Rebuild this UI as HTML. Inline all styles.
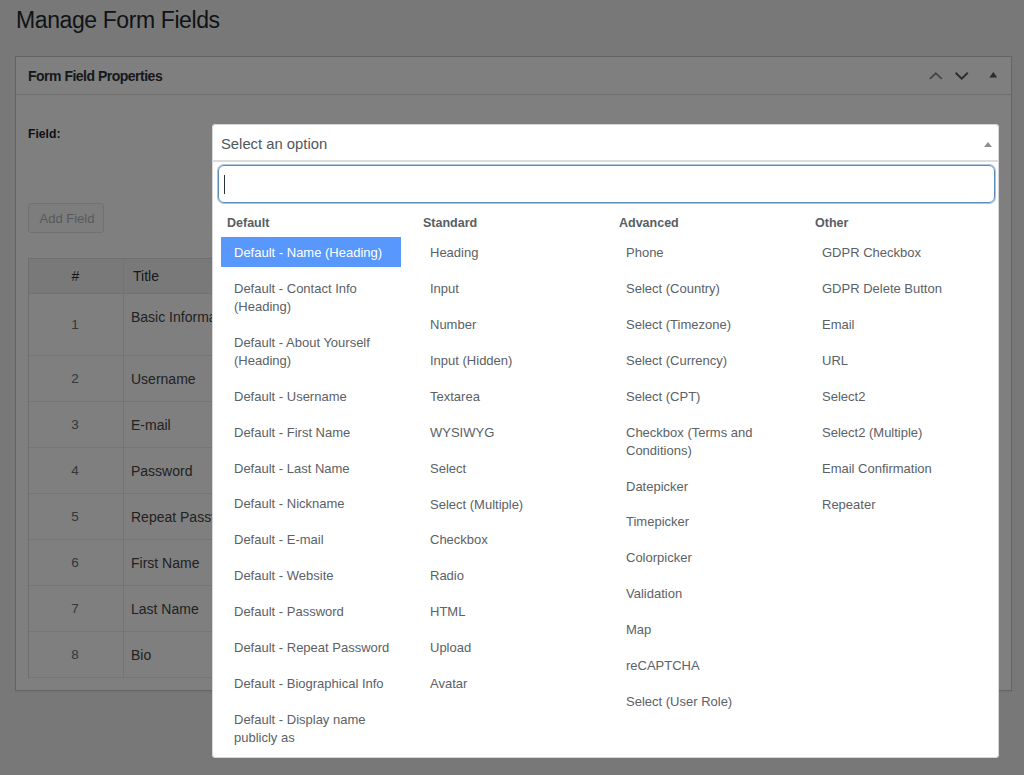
<!DOCTYPE html>
<html><head><meta charset="utf-8">
<style>
*{box-sizing:border-box;margin:0;padding:0}
html,body{width:1024px;height:775px;overflow:hidden;background:#f0f0f1;font-family:"Liberation Sans",sans-serif;color:#1d2327;position:relative}
.abs{position:absolute}
h1{position:absolute;left:16px;top:5px;font-size:23px;letter-spacing:-0.4px;font-weight:400;line-height:30px;color:#23282d;white-space:nowrap}
.panel{position:absolute;left:15px;top:56px;width:997px;height:635px;background:#fff;border:1px solid #c8c9cc;box-shadow:0 1px 1px rgba(0,0,0,.04)}
.phead{position:absolute;left:0;top:0;right:0;height:38px;border-bottom:1px solid #dcdcde}
.phead .t{position:absolute;left:12px;top:10px;font-size:14px;letter-spacing:-0.5px;font-weight:700;line-height:18px;color:#2c3338;white-space:nowrap}
.lbl{position:absolute;left:28px;top:125px;font-size:12.2px;font-weight:700;line-height:18px;color:#1d2327}
.btn{position:absolute;left:28px;padding-left:2px;padding-top:1px;top:203px;width:76px;height:30px;border:1px solid #e3e3e5;border-radius:3px;background:#fbfbfb;color:#b0b3b6;font-size:13px;line-height:28px;text-align:center}
.tbl{position:absolute;left:28px;top:258px;width:970px;height:420px;border:1px solid #dcdcde;background:#fff}
.thead{position:absolute;left:0;top:0;right:0;height:35px;background:#f3f3f3;border-bottom:1px solid #e2e2e2}
.hn{position:absolute;left:0;width:93px;top:-1px;text-align:center;font-size:14px;line-height:36px;color:#333}
.ht{position:absolute;left:104px;top:-1px;font-size:14px;line-height:36px;color:#333}
.row{position:absolute;left:0;right:0;border-bottom:1px solid #ebebeb}
.row .n{position:absolute;left:0;top:0;bottom:0;width:92px;text-align:center;font-size:13.5px;color:#6a6e73;display:flex;align-items:center;justify-content:center}
.row .ti{position:absolute;left:102px;top:0;font-size:14px;line-height:46px;color:#444;white-space:nowrap}
.vline{position:absolute;left:94px;top:0;bottom:0;width:1px;background:#e8e8e8}
.overlay{position:absolute;left:0;top:0;width:1024px;height:775px;background:rgba(0,0,0,.5)}
.dd{position:absolute;left:212px;top:124px;width:787px;height:634px;background:#fff;border-radius:4px;box-shadow:inset 0 0 0 1px #d6d6d6}
.sel{position:absolute;left:0;top:0;right:0;height:38px;border-bottom:2px solid #dcdcde}
.sel .ph{position:absolute;left:9px;top:11px;font-size:14.8px;line-height:18px;color:#50575e;white-space:nowrap}
.arrow{position:absolute;left:772px;top:18px;width:0;height:0;border-left:4px solid transparent;border-right:4px solid transparent;border-bottom:5px solid #8c8f94}
.search{position:absolute;left:6px;top:41px;width:777px;height:38px;border:1px solid #5b8bbb;box-shadow:0 0 0 1px rgba(91,139,187,.5);border-radius:6px}
.caret{position:absolute;left:5px;top:9px;width:1px;height:19px;background:#2c3338}
.col{position:absolute;top:88px;width:196px}
.gh{position:absolute;left:6px;top:2px;font-size:12.5px;font-weight:700;line-height:18px;color:#585e64;white-space:nowrap}
.opt{position:absolute;left:0;width:180px;padding:7px 0 5px 13px;font-size:13px;line-height:17.93px;color:#5b6167;white-space:nowrap}
.opt.hl{background:#5897fb;color:#fff}
</style></head><body>
<h1>Manage Form Fields</h1>
<div class="panel">
  <div class="phead"><div class="t">Form Field Properties</div></div>
</div>
<svg class="abs" style="left:920px;top:60px" width="90" height="30" viewBox="920 60 90 30">
<polyline points="929.8,78.9 935.8,73.3 941.8,78.9" fill="none" stroke="#8c8f94" stroke-width="1.9"/>
<polyline points="955.6,72.8 961.7,78.6 967.8,72.8" fill="none" stroke="#50575e" stroke-width="1.9"/>
<polygon points="989.4,77.6 993.3,72 997.2,77.6" fill="#50575e"/>
</svg>
<div class="lbl">Field:</div>
<div class="btn">Add Field</div>
<div class="tbl" id="tbl">
<div class="thead"><div class="hn">#</div><div class="ht">Title</div></div>
<div class="row" style="top:35px;height:62px"><div class="n">1</div><div class="ti">Basic Information</div></div>
<div class="row" style="top:97px;height:46px"><div class="n">2</div><div class="ti">Username</div></div>
<div class="row" style="top:143px;height:46px"><div class="n">3</div><div class="ti">E-mail</div></div>
<div class="row" style="top:189px;height:46px"><div class="n">4</div><div class="ti">Password</div></div>
<div class="row" style="top:235px;height:46px"><div class="n">5</div><div class="ti">Repeat Password</div></div>
<div class="row" style="top:281px;height:46px"><div class="n">6</div><div class="ti">First Name</div></div>
<div class="row" style="top:327px;height:46px"><div class="n">7</div><div class="ti">Last Name</div></div>
<div class="row" style="top:373px;height:46px"><div class="n">8</div><div class="ti">Bio</div></div>
<div class="vline"></div>
</div><!--tbl-->
<div class="overlay"></div>
<div class="dd">
  <div class="sel"><div class="ph">Select an option</div><div class="arrow"></div></div>
  <div class="search"><div class="caret"></div></div>
<!--opts-->
<div class="col" style="left:9px">
  <div class="gh">Default</div>
  <div class="opt hl" style="top:25px">Default - Name (Heading)</div>
  <div class="opt" style="top:60.93px">Default - Contact Info<br>(Heading)</div>
  <div class="opt" style="top:114.78999999999999px">Default - About Yourself<br>(Heading)</div>
  <div class="opt" style="top:168.64999999999998px">Default - Username</div>
  <div class="opt" style="top:204.57999999999998px">Default - First Name</div>
  <div class="opt" style="top:240.51px">Default - Last Name</div>
  <div class="opt" style="top:276.44px">Default - Nickname</div>
  <div class="opt" style="top:312.37px">Default - E-mail</div>
  <div class="opt" style="top:348.3px">Default - Website</div>
  <div class="opt" style="top:384.23px">Default - Password</div>
  <div class="opt" style="top:420.16px">Default - Repeat Password</div>
  <div class="opt" style="top:456.09000000000003px">Default - Biographical Info</div>
  <div class="opt" style="top:492.02000000000004px">Default - Display name<br>publicly as</div>
</div>
<div class="col" style="left:205px">
  <div class="gh">Standard</div>
  <div class="opt" style="top:25px">Heading</div>
  <div class="opt" style="top:60.93px">Input</div>
  <div class="opt" style="top:96.86px">Number</div>
  <div class="opt" style="top:132.79px">Input (Hidden)</div>
  <div class="opt" style="top:168.72px">Textarea</div>
  <div class="opt" style="top:204.65px">WYSIWYG</div>
  <div class="opt" style="top:240.58px">Select</div>
  <div class="opt" style="top:276.51px">Select (Multiple)</div>
  <div class="opt" style="top:312.44px">Checkbox</div>
  <div class="opt" style="top:348.37px">Radio</div>
  <div class="opt" style="top:384.3px">HTML</div>
  <div class="opt" style="top:420.23px">Upload</div>
  <div class="opt" style="top:456.16px">Avatar</div>
</div>
<div class="col" style="left:401px">
  <div class="gh">Advanced</div>
  <div class="opt" style="top:25px">Phone</div>
  <div class="opt" style="top:60.93px">Select (Country)</div>
  <div class="opt" style="top:96.86px">Select (Timezone)</div>
  <div class="opt" style="top:132.79px">Select (Currency)</div>
  <div class="opt" style="top:168.72px">Select (CPT)</div>
  <div class="opt" style="top:204.65px">Checkbox (Terms and<br>Conditions)</div>
  <div class="opt" style="top:258.51px">Datepicker</div>
  <div class="opt" style="top:294.44px">Timepicker</div>
  <div class="opt" style="top:330.37px">Colorpicker</div>
  <div class="opt" style="top:366.3px">Validation</div>
  <div class="opt" style="top:402.23px">Map</div>
  <div class="opt" style="top:438.16px">reCAPTCHA</div>
  <div class="opt" style="top:474.09000000000003px">Select (User Role)</div>
</div>
<div class="col" style="left:597px">
  <div class="gh">Other</div>
  <div class="opt" style="top:25px">GDPR Checkbox</div>
  <div class="opt" style="top:60.93px">GDPR Delete Button</div>
  <div class="opt" style="top:96.86px">Email</div>
  <div class="opt" style="top:132.79px">URL</div>
  <div class="opt" style="top:168.72px">Select2</div>
  <div class="opt" style="top:204.65px">Select2 (Multiple)</div>
  <div class="opt" style="top:240.58px">Email Confirmation</div>
  <div class="opt" style="top:276.51px">Repeater</div>
</div>
<!--/opts-->
</div>
</body></html>
